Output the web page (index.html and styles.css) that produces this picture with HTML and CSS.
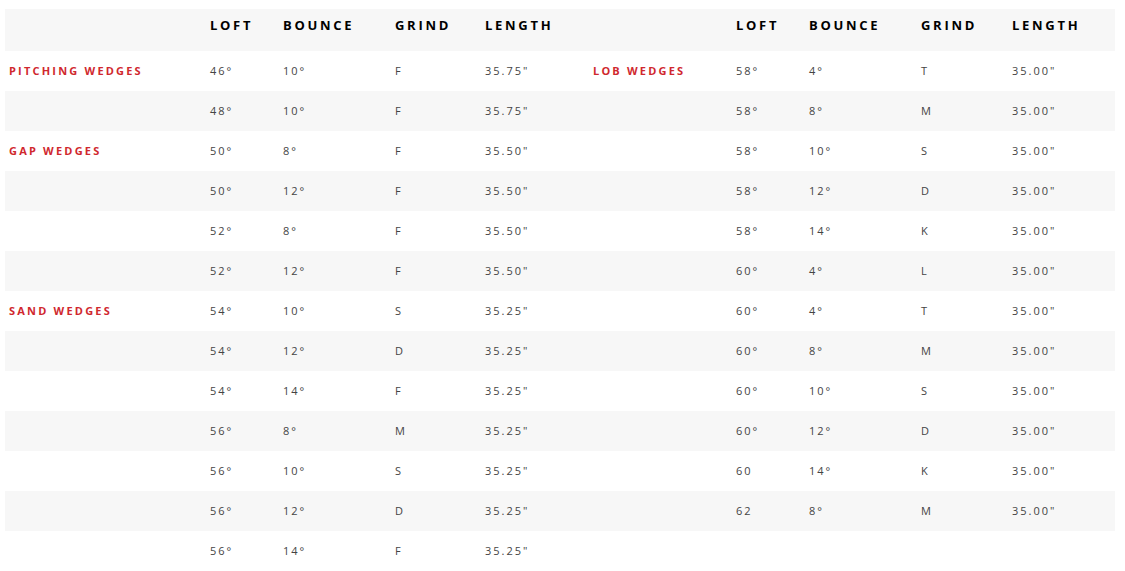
FILE: index.html
```html
<!DOCTYPE html>
<html>
<head>
<meta charset="utf-8">
<link rel="stylesheet" href="styles.css">
</head>
<body>
<div class="table">
  <div class="row head">
    <div></div><div>LOFT</div><div>BOUNCE</div><div>GRIND</div><div>LENGTH</div>
    <div></div><div>LOFT</div><div>BOUNCE</div><div>GRIND</div><div>LENGTH</div>
  </div>
  <div class="row"><div class="lbl">PITCHING WEDGES</div><div>46°</div><div>10°</div><div>F</div><div>35.75"</div><div class="lbl">LOB WEDGES</div><div>58°</div><div>4°</div><div>T</div><div>35.00"</div></div>
  <div class="row alt"><div></div><div>48°</div><div>10°</div><div>F</div><div>35.75"</div><div></div><div>58°</div><div>8°</div><div>M</div><div>35.00"</div></div>
  <div class="row"><div class="lbl">GAP WEDGES</div><div>50°</div><div>8°</div><div>F</div><div>35.50"</div><div></div><div>58°</div><div>10°</div><div>S</div><div>35.00"</div></div>
  <div class="row alt"><div></div><div>50°</div><div>12°</div><div>F</div><div>35.50"</div><div></div><div>58°</div><div>12°</div><div>D</div><div>35.00"</div></div>
  <div class="row"><div></div><div>52°</div><div>8°</div><div>F</div><div>35.50"</div><div></div><div>58°</div><div>14°</div><div>K</div><div>35.00"</div></div>
  <div class="row alt"><div></div><div>52°</div><div>12°</div><div>F</div><div>35.50"</div><div></div><div>60°</div><div>4°</div><div>L</div><div>35.00"</div></div>
  <div class="row"><div class="lbl">SAND WEDGES</div><div>54°</div><div>10°</div><div>S</div><div>35.25"</div><div></div><div>60°</div><div>4°</div><div>T</div><div>35.00"</div></div>
  <div class="row alt"><div></div><div>54°</div><div>12°</div><div>D</div><div>35.25"</div><div></div><div>60°</div><div>8°</div><div>M</div><div>35.00"</div></div>
  <div class="row"><div></div><div>54°</div><div>14°</div><div>F</div><div>35.25"</div><div></div><div>60°</div><div>10°</div><div>S</div><div>35.00"</div></div>
  <div class="row alt"><div></div><div>56°</div><div>8°</div><div>M</div><div>35.25"</div><div></div><div>60°</div><div>12°</div><div>D</div><div>35.00"</div></div>
  <div class="row"><div></div><div>56°</div><div>10°</div><div>S</div><div>35.25"</div><div></div><div>60</div><div>14°</div><div>K</div><div>35.00"</div></div>
  <div class="row alt"><div></div><div>56°</div><div>12°</div><div>D</div><div>35.25"</div><div></div><div>62</div><div>8°</div><div>M</div><div>35.00"</div></div>
  <div class="row"><div></div><div>56°</div><div>14°</div><div>F</div><div>35.25"</div><div></div><div></div><div></div><div></div><div></div></div>
</div>
</body>
</html>
```
FILE: styles.css
```css
html, body {
  margin: 0;
  padding: 0;
  background: #fff;
}
body {
  padding: 9px 10px 0 5px;
  font-family: "Open Sans", "Liberation Sans", sans-serif;
}
.table {
  width: 1110px;
}
.row {
  display: grid;
  grid-template-columns: 201px 73px 112px 90px 108px 143px 73px 112px 91px 107px;
  height: 40px;
  align-items: center;
  font-size: 11px;
  letter-spacing: 2px;
  color: #444;
}
.row > div {
  padding-left: 4px;
  padding-bottom: 2px;
  white-space: nowrap;
}
.row.alt, .row.head {
  background: #f7f7f7;
}
.row.head {
  height: 42px;
  align-items: start;
  font-size: 13px;
  font-weight: 700;
  letter-spacing: 2.7px;
  color: #000;
}
.row.head > div {
  padding-top: 7px;
  padding-bottom: 0;
}
.lbl {
  color: #d0282e;
  font-weight: 700;
  letter-spacing: 2.2px;
}
```
